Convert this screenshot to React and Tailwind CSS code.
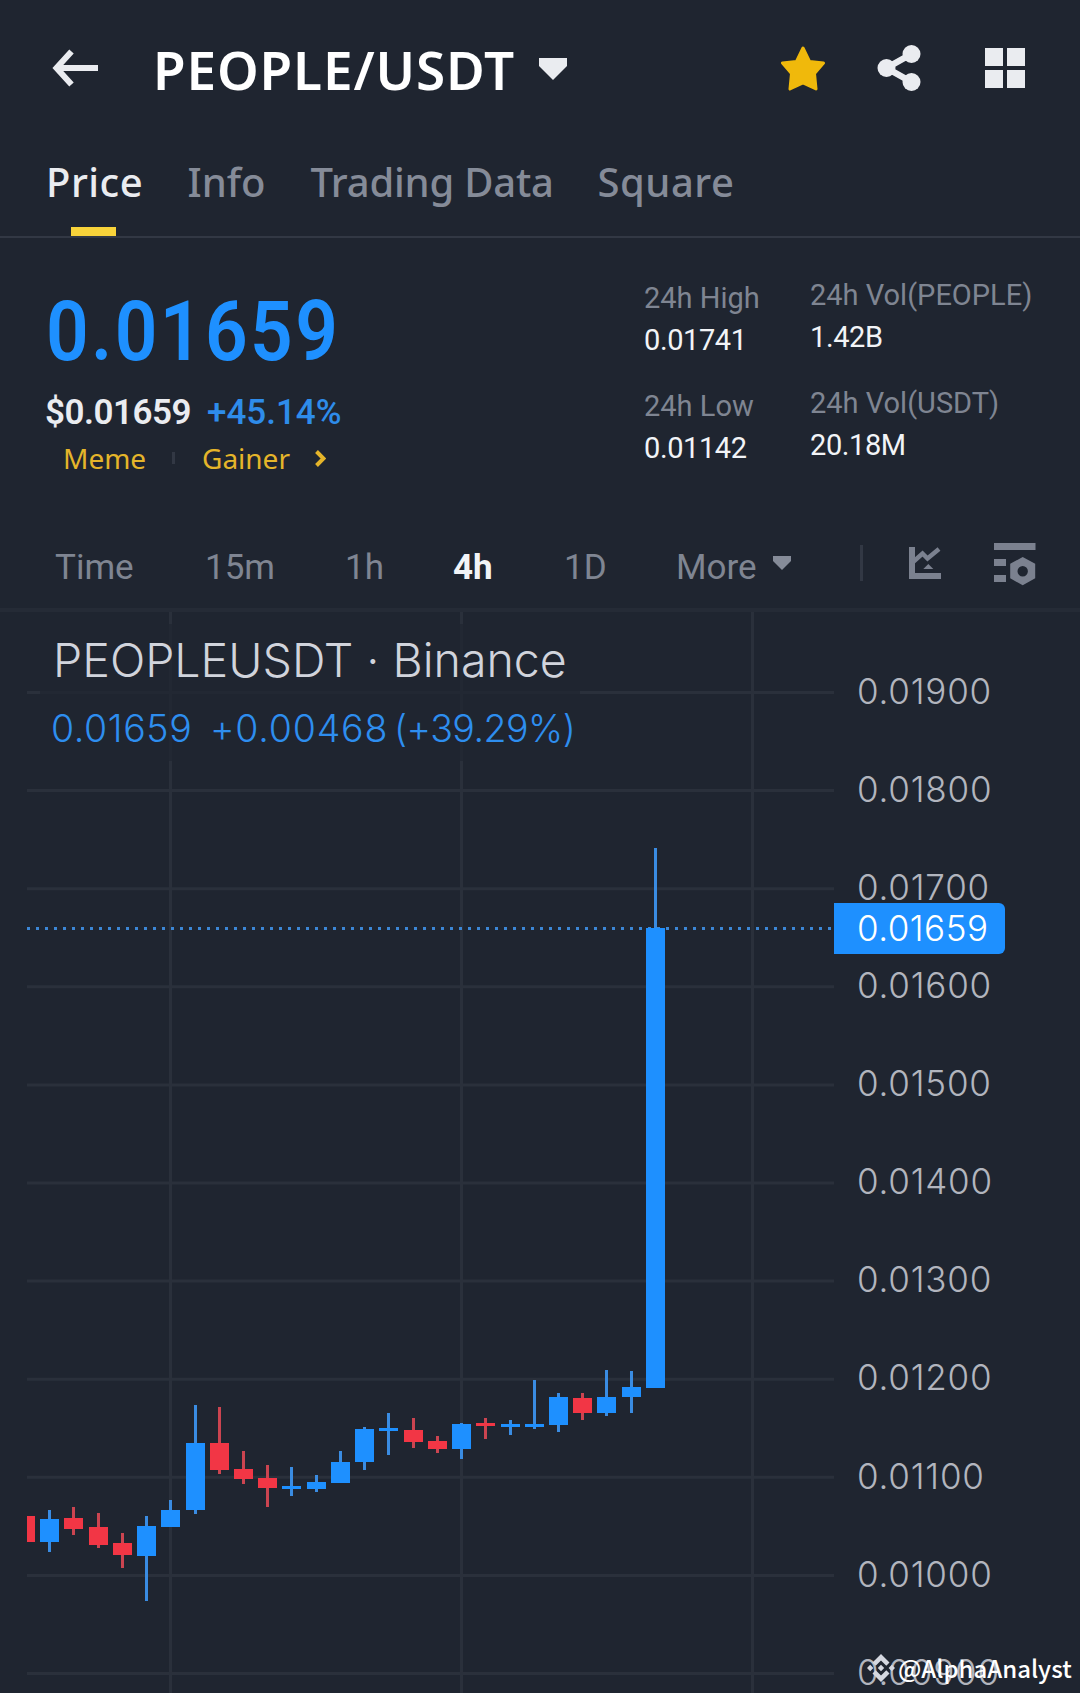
import React from "react";
import clsx from "clsx";

const tabs = [
	{ label: "Price", className: "w-[141.5px] tracking-[0.5px]", active: true },
	{ label: "Info", className: "w-[123px]" },
	{ label: "Trading Data", className: "w-[287px] tracking-[-0.2px]" },
	{ label: "Square", className: "tracking-[0.5px]" },
];

const stats = [
	[
		{ label: "24h High", value: "0.01741" },
		{ label: "24h Low", value: "0.01142" },
	],
	[
		{ label: "24h Vol(PEOPLE)", value: "1.42B" },
		{ label: "24h Vol(USDT)", value: "20.18M" },
	],
];

const intervals = [
	{ label: "Time", className: "w-[150px]" },
	{ label: "15m", className: "w-[140px]" },
	{ label: "1h", className: "w-[108px]" },
	{ label: "4h", className: "w-[111px]", active: true },
	{ label: "1D", className: "w-[112px]" },
	{ label: "More", className: "w-[97px]" },
];

const axisLabels = [
	"0.01900",
	"0.01800",
	"0.01700",
	"0.01600",
	"0.01500",
	"0.01400",
	"0.01300",
	"0.01200",
	"0.01100",
	"0.01000",
	"0.00900",
];

const CHART_TOP = 612;
const FIRST_LINE = 692.5;
const LINE_STEP = 98.1;

// [center x, body top, body bottom, wick top, wick bottom, is up]
const candles = [
	[49.5, 1519, 1542, 1510, 1552, true],
	[73.5, 1518, 1529, 1507, 1535, false],
	[98.5, 1527, 1545, 1513, 1548, false],
	[122.5, 1543, 1555, 1533, 1568, false],
	[146.5, 1526, 1556, 1516, 1601, true],
	[170.5, 1510, 1527, 1500, 1527, true],
	[195.5, 1443, 1510, 1405, 1514, true],
	[219.5, 1443, 1470, 1407, 1474, false],
	[243.5, 1469, 1479, 1451, 1484, false],
	[267.5, 1478, 1488, 1465, 1507, false],
	[291.5, 1486, 1489, 1467, 1496, true],
	[316.5, 1482, 1489, 1475, 1492, true],
	[340.5, 1462, 1483, 1451, 1483, true],
	[364.5, 1429, 1462, 1427, 1470, true],
	[388.5, 1428, 1431, 1413, 1455, true],
	[413.5, 1430, 1442, 1418, 1448, false],
	[437.5, 1441, 1449, 1436, 1453, false],
	[461.5, 1424, 1449, 1423, 1459, true],
	[485.5, 1423, 1426, 1418, 1439, false],
	[510.5, 1424, 1427, 1420, 1435, true],
	[534.5, 1424, 1427, 1380, 1429, true],
	[558.5, 1397, 1425, 1393, 1432, true],
	[582.5, 1398, 1413, 1393, 1420, false],
	[606.5, 1397, 1413, 1370, 1416, true],
	[631.5, 1387, 1397, 1371, 1413, true],
	[655.5, 928, 1388, 848, 928, true],
];

const Header = () => (
	<header className="flex h-[136px] items-center pl-[52px] pr-[55px]">
		<svg width="46" height="38" viewBox="0 0 46 38" className="shrink-0">
			<path
				d="M46 19H5M19.5 2.5L4.5 19l15 16.5"
				fill="none"
				stroke="#eaecf0"
				strokeWidth="6"
			/>
		</svg>
		<h1 className="ml-[55px] mt-[3px] whitespace-nowrap font-['Noto_Sans',sans-serif] text-[53px] font-semibold tracking-[0.9px] text-white">
			PEOPLE/USDT
		</h1>
		<svg
			width="28"
			height="22"
			viewBox="0 0 28 22"
			className="absolute left-[539px] top-[58px]"
		>
			<path d="M0 0h28v8L14 22 0 8z" fill="#eaecf0" />
		</svg>

		<div className="ml-auto flex items-center">
			<svg width="46" height="46" viewBox="0 0 46 46" className="mt-px">
				<path
					d="M23 2l6.5 13.5 14 1.5-9 10.500 1.500 15.500L23 37 10 43l1.500-15.500L2.500 17l14-1.500z"
					fill="#f0b90b"
					stroke="#f0b90b"
					strokeWidth="3"
					strokeLinejoin="round"
				/>
			</svg>
			<svg width="44" height="46" viewBox="0 0 44 46" className="ml-[51px]">
				<path
					d="M34.500 9L9.500 23l25 14"
					fill="none"
					stroke="#eaecf0"
					strokeWidth="6.500"
				/>
				<g fill="#eaecf0">
					<circle cx="34.500" cy="9" r="9" />
					<circle cx="9.500" cy="23" r="9" />
					<circle cx="34.500" cy="37" r="9" />
				</g>
			</svg>
			<div className="ml-16 grid grid-cols-2 gap-1">
				<i className="size-[18px] bg-[#eaecf0]" />
				<i className="size-[18px] bg-[#eaecf0]" />
				<i className="size-[18px] bg-[#eaecf0]" />
				<i className="size-[18px] bg-[#eaecf0]" />
			</div>
		</div>
	</header>
);

const Tabs = () => (
	<nav className="flex h-[102px] border-b-2 border-[#323844] pl-[46px] font-['Noto_Sans',sans-serif] text-[40px] font-medium">
		{tabs.map((tab) => (
			<div
				key={tab.label}
				className={clsx(
					"relative whitespace-nowrap pt-[17px] leading-[58px]",
					tab.className,
					tab.active ? "text-[#eaecf0]" : "text-[#858b98]",
				)}
			>
				{tab.label}
				{tab.active && (
					<span className="absolute bottom-0 left-[25px] h-[9px] w-[45px] bg-[#f8d33a]" />
				)}
			</div>
		))}
	</nav>
);

const Summary = () => (
	<section className="flex h-[287px]">
		<div className="w-[598px] pl-[45px] pt-11">
			<div className="ml-px h-[100px]">
				<span className="inline-block origin-left scale-x-[0.89] font-['Roboto',sans-serif] text-[84px] font-semibold leading-[100px] tracking-[2.7px] text-[#1e90ff]">
					0.01659
				</span>
			</div>
			<div className="mt-[11px] flex font-['Roboto',sans-serif] text-[35px] leading-10">
				<span className="w-[162px] font-semibold tracking-[-0.5px] text-[#eaecf0]">
					$0.01659
				</span>
				<span className="font-medium text-[#2e8cea]">+45.14%</span>
			</div>
			<div className="mt-[7px] flex h-9 items-center pl-[18px] font-['Noto_Sans',sans-serif] text-[28px] leading-9 text-[#e5b52a]">
				<span className="w-[109px]">Meme</span>
				<span className="h-3 w-[3px] bg-[#323844]" />
				<span className="ml-[27px] w-[113px]">Gainer</span>
				<svg width="11" height="17" viewBox="0 0 11 17">
					<path
						d="M1.500 1.500l7 7-7 7"
						fill="none"
						stroke="#e5b52a"
						strokeWidth="4"
					/>
				</svg>
			</div>
		</div>

		<div className="flex whitespace-nowrap pl-[46px] font-['Roboto',sans-serif] text-[29px] leading-[42px]">
			{stats.map((column, i) => (
				<div
					key={column[0].label}
					className={clsx(
						"flex flex-col gap-6",
						i === 0 ? "w-[166px] pt-[39px]" : "pt-9",
					)}
				>
					{column.map((stat) => (
						<div key={stat.label}>
							<div className="text-[#7f8592]">{stat.label}</div>
							<div className="tracking-[-0.4px] text-[#f2f4f7]">
								{stat.value}
							</div>
						</div>
					))}
				</div>
			))}
		</div>
	</section>
);

const Intervals = () => (
	<div className="flex h-[87px] items-center whitespace-nowrap border-b-4 border-[#252b36] pl-[55px] font-['Roboto',sans-serif] text-[35px] text-[#7f8592]">
		{intervals.map((item) => (
			<span
				key={item.label}
				className={clsx(
					"pt-[3px]",
					item.className,
					item.active && "font-bold text-[#f2f4f7]",
				)}
			>
				{item.label}
			</span>
		))}
		<svg width="18" height="14" viewBox="0 0 18 14" className="-mt-2">
			<path d="M0 0h18v5l-9 9-9-9z" fill="#858b98" />
		</svg>
		<span className="-mt-2 ml-[69px] h-9 w-[3px] bg-[#323844]" />
		<svg width="32" height="32" viewBox="0 0 32 32" className="-mt-2 ml-[46px]">
			<path d="M0 0h6v26h26v6H0z" fill="#7b818f" />
			<path
				d="M4 15l9.500-8.500 5 5L30 2"
				fill="none"
				stroke="#7b818f"
				strokeWidth="4.500"
			/>
			<path d="M19.300 17l5 5h-10z" fill="#7b818f" />
		</svg>
		<svg width="42" height="43" viewBox="0 0 42 43" className="-mt-1 ml-[53px]">
			<g fill="#7b818f">
				<path d="M0 0h41.500v7H0zM0 16h12v7H0zM0 32h12v7H0z" />
				<path
					fillRule="evenodd"
					d="M28.700 14l12.500 6.800v14.400L28.700 42.300l-12.500-7.100V20.800zM28.700 23a5.200 5.200 0 1 0 0 10.400 5.200 5.200 0 0 0 0-10.400z"
				/>
			</g>
		</svg>
	</div>
);

const Candles = () => (
	<svg
		width="834"
		height="1081"
		viewBox={`0 ${CHART_TOP} 834 1081`}
		className="block shrink-0"
	>
		<g stroke="#2a303b" strokeWidth="3">
			{axisLabels.map((label, i) => (
				<line
					key={label}
					x1="27"
					x2="834"
					y1={FIRST_LINE + i * LINE_STEP}
					y2={FIRST_LINE + i * LINE_STEP}
				/>
			))}
			{[170.5, 461.5, 752.5].map((x) => (
				<line key={x} x1={x} x2={x} y1={CHART_TOP} y2="1693" />
			))}
		</g>
		<line
			x1="27"
			x2="834"
			y1="928.500"
			y2="928.500"
			stroke="#3c87d6"
			strokeWidth="3"
			strokeDasharray="3 6"
		/>
		<rect x="27" y="1516" width="8" height="26" fill="#f23645" />
		{candles.map(([x, top, bottom, high, low, up]) => (
			<g key={x}>
				<rect
					x={x - 1.5}
					y={high}
					width="3"
					height={low - high}
					fill={up ? "#3a8ce2" : "#cb4450"}
				/>
				<rect
					x={x - 9.5}
					y={top}
					width="19"
					height={bottom - top}
					fill={up ? "#1e90ff" : "#f23645"}
				/>
			</g>
		))}
	</svg>
);

const Chart = () => (
	<section className="relative flex h-[1081px] overflow-hidden font-['Inter',sans-serif] font-light">
		<Candles />

		<div className="absolute left-10 top-3 w-[540px] whitespace-nowrap bg-[#1f2530]/70 pl-[13px]">
			<div className="text-[46.500px] leading-[72px] text-[#d1d4dc]">
				PEOPLEUSDT · Binance
			</div>
			<div className="-ml-0.5 flex pt-px text-[37.500px] leading-[64px] text-[#2e8eef]">
				<span className="w-[159px] tracking-[0.6px]">0.01659</span>
				<span className="w-[184px] tracking-[0.8px]">+0.00468</span>
				<span className="tracking-[-0.5px]">(+39.29%)</span>
			</div>
		</div>

		<div className="relative flex-1 pt-[30px] text-[35px] tracking-[0.8px] text-[#b2b5be]">
			{axisLabels.map((label) => (
				<div key={label} className="flex h-[98.1px] items-center pl-[23px]">
					{label}
				</div>
			))}
			<div className="absolute left-0 top-[291px] flex h-[51px] w-[171px] items-center rounded-r-md bg-[#1e90ff] pl-[23px] tracking-[0.5px] text-white">
				0.01659
			</div>
		</div>
	</section>
);

const Watermark = () => (
	<div className="absolute left-[867px] top-[1648px] flex h-10 items-center whitespace-nowrap font-['Noto_Sans_CJK_SC',sans-serif] text-[24px] font-medium text-white">
		<svg width="28" height="28" viewBox="0 0 28 28" fill="#d5d8e0">
			<path d="M14 0l8.500 8.500-3.200 3.200L14 6.400l-5.300 5.300-3.200-3.200z" />
			<path d="M14 28l8.500-8.500-3.200-3.200-5.300 5.300-5.300-5.300-3.200 3.200z" />
			<path d="M14 10.800l3.200 3.200-3.200 3.200-3.200-3.200zM3.200 10.800L6.400 14l-3.200 3.200L0 14zM24.800 10.800L28 14l-3.200 3.200-3.200-3.200z" />
		</svg>
		<span className="ml-[3px]">@AlphaAnalyst</span>
	</div>
);

const App = () => {
	return (
		<main className="relative h-[1693px] w-[1080px] overflow-hidden bg-[#1f2530]">
			<Header />
			<Tabs />
			<Summary />
			<Intervals />
			<Chart />
			<Watermark />
		</main>
	);
};

export default App;
